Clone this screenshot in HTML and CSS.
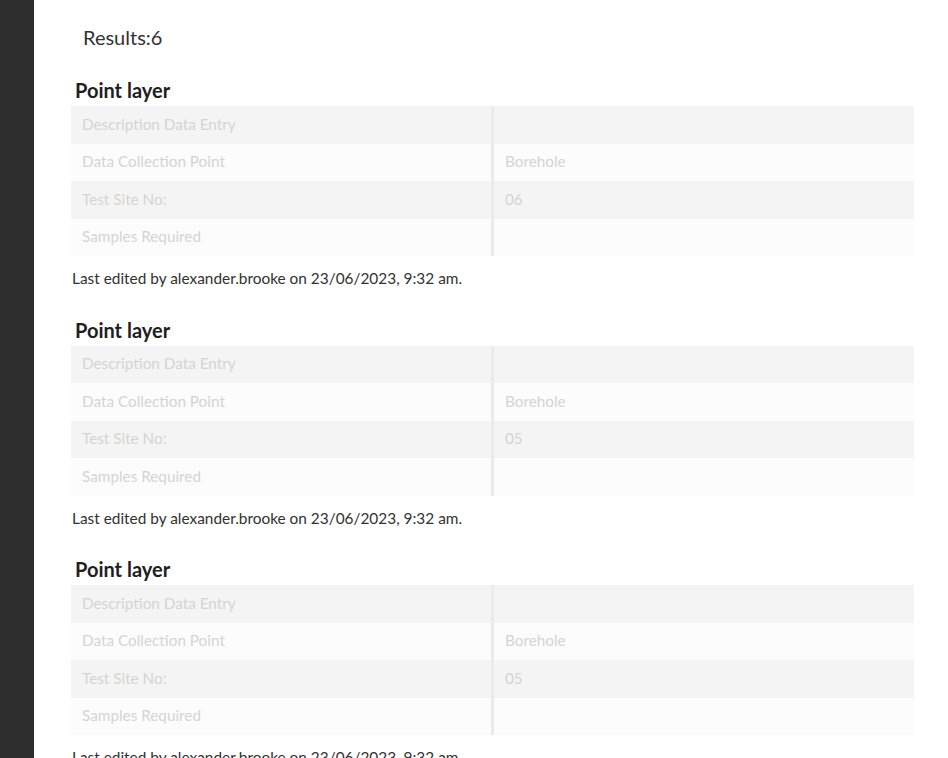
FILE: index.html
```html
<!DOCTYPE html>
<html>
<head>
<meta charset="utf-8">
<link rel="stylesheet" href="styles.css">
</head>
<body>
<div class="app">
  <aside class="sidebar"></aside>
  <main class="content">
    <div class="results">Results:6</div>

    <section class="feature">
      <h2 class="title">Point layer</h2>
      <div class="attrs">
        <div class="row"><div class="key">Description Data Entry</div><div class="val"></div></div>
        <div class="row"><div class="key">Data Collection Point</div><div class="val">Borehole</div></div>
        <div class="row"><div class="key">Test Site No:</div><div class="val">06</div></div>
        <div class="row"><div class="key">Samples Required</div><div class="val"></div></div>
      </div>
      <p class="edited">Last edited by alexander.brooke on 23/06/2023, 9:32 am.</p>
    </section>

    <section class="feature">
      <h2 class="title">Point layer</h2>
      <div class="attrs">
        <div class="row"><div class="key">Description Data Entry</div><div class="val"></div></div>
        <div class="row"><div class="key">Data Collection Point</div><div class="val">Borehole</div></div>
        <div class="row"><div class="key">Test Site No:</div><div class="val">05</div></div>
        <div class="row"><div class="key">Samples Required</div><div class="val"></div></div>
      </div>
      <p class="edited">Last edited by alexander.brooke on 23/06/2023, 9:32 am.</p>
    </section>

    <section class="feature">
      <h2 class="title">Point layer</h2>
      <div class="attrs">
        <div class="row"><div class="key">Description Data Entry</div><div class="val"></div></div>
        <div class="row"><div class="key">Data Collection Point</div><div class="val">Borehole</div></div>
        <div class="row"><div class="key">Test Site No:</div><div class="val">05</div></div>
        <div class="row"><div class="key">Samples Required</div><div class="val"></div></div>
      </div>
      <p class="edited">Last edited by alexander.brooke on 23/06/2023, 9:32 am.</p>
    </section>
  </main>
</div>
</body>
</html>
```
FILE: styles.css
```css
html, body {
  margin: 0;
  padding: 0;
  height: 100%;
  overflow: hidden;
  background: #ffffff;
}
body {
  font-family: Lato, "Open Sans", "Liberation Sans", sans-serif;
  color: #323232;
}
.app {
  display: flex;
  height: 100%;
}
.sidebar {
  width: 34px;
  flex: none;
  background: #2e2e2e;
}
.content {
  flex: 1;
  padding: 25px 34px 0 37px;
}
.results {
  margin-left: 12px;
  font-size: 20px;
  line-height: 24px;
  color: #323232;
  margin-bottom: 29px;
}
.feature {
  margin-bottom: 29.5px;
}
.title {
  margin: 0 0 4px 4px;
  font-size: 20px;
  line-height: 24px;
  font-weight: 700;
  color: #202020;
}
.attrs {
  display: flex;
  flex-direction: column;
}
.row {
  display: flex;
  height: 37.5px;
  background: #f4f4f4;
  font-size: 15.3px;
  color: #d4d4d4;
}
.row:nth-child(even) {
  background: #fcfcfc;
}
.key {
  width: 409px;
  flex: none;
  padding: 0 0 2px 11px;
  border-right: 3px solid #ebebeb;
  display: flex;
  align-items: center;
}
.val {
  flex: 1;
  padding: 0 0 2px 11px;
  display: flex;
  align-items: center;
}
.edited {
  margin: 12px 0 0 1px;
  font-size: 15.4px;
  line-height: 20px;
  color: #323232;
}
```
